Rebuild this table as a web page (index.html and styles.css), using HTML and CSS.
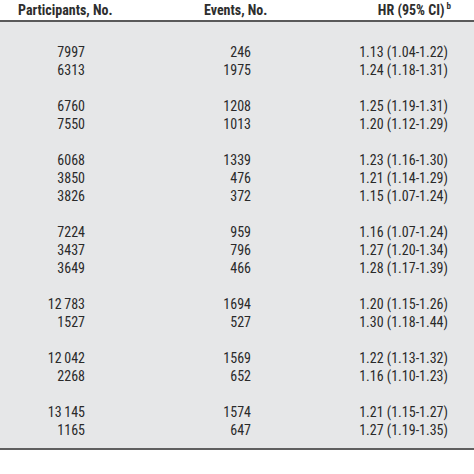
FILE: index.html
```html
<!DOCTYPE html>
<html>
<head>
<meta charset="utf-8">
<link rel="stylesheet" href="styles.css">
</head>
<body>
<div class="tbl">
  <div class="head">
    <div class="h1">Participants, No.</div>
    <div class="h2">Events, No.</div>
    <div class="h3">HR (95% CI)<sup>b</sup></div>
  </div>
  <div class="body">
    <div class="group">
      <div class="row"><span>7997</span><span>246</span><span>1.13 (1.04-1.22)</span></div>
      <div class="row"><span>6313</span><span>1975</span><span>1.24 (1.18-1.31)</span></div>
    </div>
    <div class="group">
      <div class="row"><span>6760</span><span>1208</span><span>1.25 (1.19-1.31)</span></div>
      <div class="row"><span>7550</span><span>1013</span><span>1.20 (1.12-1.29)</span></div>
    </div>
    <div class="group">
      <div class="row"><span>6068</span><span>1339</span><span>1.23 (1.16-1.30)</span></div>
      <div class="row"><span>3850</span><span>476</span><span>1.21 (1.14-1.29)</span></div>
      <div class="row"><span>3826</span><span>372</span><span>1.15 (1.07-1.24)</span></div>
    </div>
    <div class="group">
      <div class="row"><span>7224</span><span>959</span><span>1.16 (1.07-1.24)</span></div>
      <div class="row"><span>3437</span><span>796</span><span>1.27 (1.20-1.34)</span></div>
      <div class="row"><span>3649</span><span>466</span><span>1.28 (1.17-1.39)</span></div>
    </div>
    <div class="group">
      <div class="row"><span>12&#8201;783</span><span>1694</span><span>1.20 (1.15-1.26)</span></div>
      <div class="row"><span>1527</span><span>527</span><span>1.30 (1.18-1.44)</span></div>
    </div>
    <div class="group">
      <div class="row"><span>12&#8201;042</span><span>1569</span><span>1.22 (1.13-1.32)</span></div>
      <div class="row"><span>2268</span><span>652</span><span>1.16 (1.10-1.23)</span></div>
    </div>
    <div class="group">
      <div class="row"><span>13&#8201;145</span><span>1574</span><span>1.21 (1.15-1.27)</span></div>
      <div class="row"><span>1165</span><span>647</span><span>1.27 (1.19-1.35)</span></div>
    </div>
  </div>
</div>
</body>
</html>
```

FILE: styles.css
```css
html, body {
  margin: 0;
  padding: 0;
  background: #ffffff;
}

.tbl {
  width: 474px;
  font-family: "Roboto Condensed", "Liberation Sans", sans-serif;
  color: #2a2a2a;
}

.head {
  display: grid;
  grid-template-columns: 186px 1fr auto;
  height: 20px;
  padding: 0 23px 0 18px;
  border-bottom: 2px solid #5a5a5a;
  font-size: 14px;
  font-weight: bold;
  line-height: 20px;
  color: #2e2e2e;
  white-space: nowrap;
}

.h3 sup {
  font-size: 9px;
  line-height: 0;
  vertical-align: 6px;
  margin-left: 2px;
}

.body {
  background: #e6e7e8;
  padding: 3px 0 9px;
  border-bottom: 2px solid #5f5f5f;
}

.group {
  padding-top: 18px;
}

.row {
  display: grid;
  grid-template-columns: 85px 166px 197px;
  font-size: 14px;
  line-height: 18px;
  height: 18px;
  text-align: right;
  white-space: nowrap;
}
```
